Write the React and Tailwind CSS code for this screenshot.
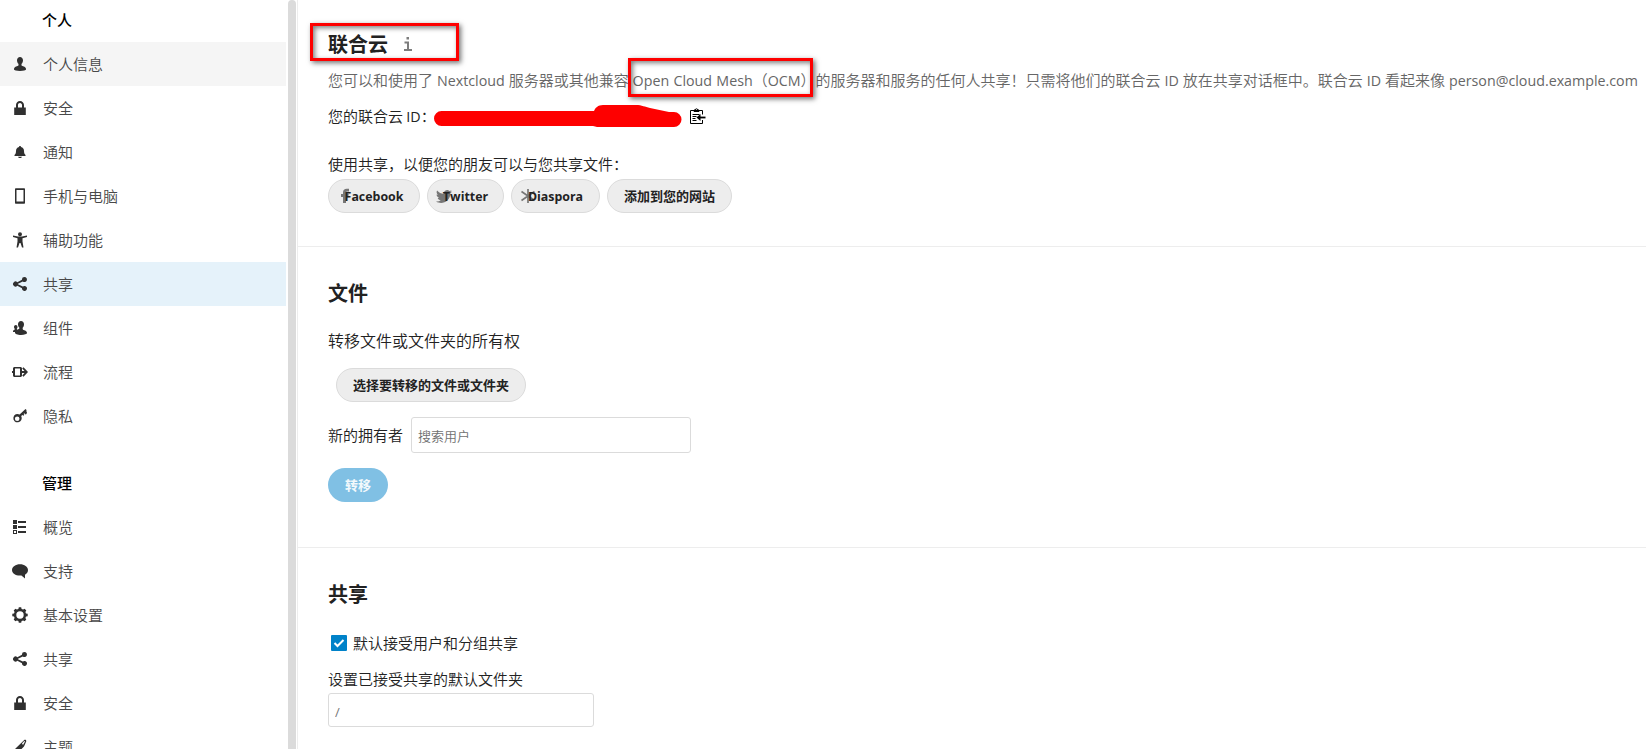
import React, { useState } from 'react';

const icons = {
  user: (
    <path d="M8 1C6.300 1 5 2.300 5 4.200c0 1.600.6 2.800 1.400 3.500.3.9.2 1.500-.2 2C4.600 10.300 2 11 2 12.800v.8C2 14.300 4.600 15 8 15s6-.7 6-1.400v-.8c0-1.800-2.600-2.500-4.200-3.100-.4-.5-.5-1.100-.2-2C10.400 7 11 5.800 11 4.200 11 2.300 9.700 1 8 1z" />
  ),
  lock: (
    <path d="M8 1C5.700 1 4 2.900 4 5v2.500H2.200V15h11.600V7.500H12V5c0-2.300-1.800-4-4-4zm0 2c1.250 0 2 1 2 2v2.500H6V5c0-1.200.75-2 2-2z" />
  ),
  bell: (
    <path d="M8 2c-.6 0-1 .4-1 1C5 3.500 4 5 4 7c0 2-.5 3-1.500 4v1h11v-1C12.500 10 12 9 12 7c0-2-1-3.500-3-4 0-.6-.4-1-1-1zM6 12.800c.2.8 1 1.300 2 1.300s1.800-.5 2-1.300z" />
  ),
  phone: (
    <path fillRule="evenodd" d="M4 .2h8c.6 0 1 .4 1 1v13.600c0 .6-.4 1-1 1H4c-.6 0-1-.4-1-1V1.200c0-.6.4-1 1-1zM4.500 2v11.500h7V2z" />
  ),
  accessibility: (
    <path d="M8 .2a2 2 0 1 1 0 4 2 2 0 0 1 0-4zM1 3.500l5 1h4l5-1v1.400l-4.500 1.300v3.300l1 6H10L8.500 11h-1L6 15.500H4.500l1-6V6.200L1 4.900z" />
  ),
  share: (
    <path d="M12.500 1a2.500 2.500 0 0 0-2.500 2.800L5.300 6.200a2.500 2.500 0 1 0 0 3.600l4.700 2.400a2.500 2.500 0 1 0 .8-1.600L6 8.200v-.4l4.800-2.400A2.500 2.500 0 1 0 12.500 1z" />
  ),
  group: (
    <path d="M9 1C7.200 1 6 2.300 6 4.200c0 1.500.5 2.600 1.300 3.300.2.6.1 1.200-.3 1.600-.6.2-1.200.4-1.700.7-.4-.3-.6-.5-.5-1 .5-.5.7-1.100.7-1.900C5.500 5.800 4.800 5 3.800 5S2 5.800 2 6.900c0 .8.300 1.500.7 1.900.1.500 0 .8-.2 1-.7.3-1.500.7-1.500 1.500v.7h2v.800C3 13.900 5.500 15 9 15s6-1 6-1.700v-.6c0-1.700-2.400-2.400-4-3-.4-.5-.5-1.200-.2-2.100C11.500 7 12 5.700 12 4.200 12 2.300 10.800 1 9 1z" />
  ),
  flow: (
    <path fillRule="evenodd" d="M2.500 3h6c.8 0 1.500.6 1.500 1.500V7h2.500l-2.300-2.400L11.500 3.300 16 8l-4.500 4.700-1.300-1.300L12.500 9H10v2.500c0 .9-.7 1.500-1.500 1.500h-6c-.8 0-1.500-.6-1.500-1.500V9H0V7h1V4.500C1 3.600 1.700 3 2.500 3zM3 4.500v7h5V4.500z" />
  ),
  key: (
    <path fillRule="evenodd" d="M13.500 1l1.300 1.300-.8.8 1 1-.5 2-1 .3-1.200-1.200-.7.700.8.8-1 1-1-.8-1.200 1.200a4.200 4.200 0 1 1-1.600-1.600zM5.200 8.400a2.300 2.300 0 1 0 0 4.600 2.300 2.300 0 0 0 0-4.600z" />
  ),
  overview: (
    <path fillRule="evenodd" d="M1 1h4v4H1zM6 2h8v2H6zM1 6h4v4H1zM6 7h8v2H6zM1 11h4v4H1zM2 12v2h2v-2zM6 12h8v2H6z" />
  ),
  support: (
    <path d="M8 1.300c4.400 0 8 2.500 8 5.700 0 2.100-1.100 3.700-3 4.700v3.800l-3.600-3C4.500 13.200 0 10.800 0 7c0-3.200 3.600-5.700 8-5.700z" />
  ),
  gear: (
    <path fillRule="evenodd" d="M6.800.3h2.400l.4 1.700 1.500.6 1.500-.9 1.700 1.700-.9 1.500.6 1.500 1.700.4v2.400l-1.700.4-.6 1.500.9 1.500-1.700 1.700-1.500-.9-1.500.6-.4 1.700H6.800L6.400 14l-1.500-.6-1.500.9-1.700-1.700.9-1.500L2 9.600.3 9.200V6.800L2 6.400l.6-1.500-.9-1.500 1.700-1.700 1.500.9L6.400 2zM8 4.300a3.700 3.700 0 1 0 0 7.400 3.700 3.700 0 0 0 0-7.400z" />
  ),
  theme: (
    <path fillRule="evenodd" d="M12.500.8c1.200-.3 2 .4 1.700 1.800L12 7.500 6.500 13 1 15.500 3 10zM12.300 2L10 4.500l1 1.400L13 2.600z" />
  ),
};

const personal = [
  { icon: 'user', label: '个人信息', className: 'bg-[#f5f5f5]' },
  { icon: 'lock', label: '安全' },
  { icon: 'bell', label: '通知' },
  { icon: 'phone', label: '手机与电脑' },
  { icon: 'accessibility', label: '辅助功能' },
  { icon: 'share', label: '共享', className: 'bg-[#e5f2fa]' },
  { icon: 'group', label: '组件' },
  { icon: 'flow', label: '流程' },
  { icon: 'key', label: '隐私' },
];

const admin = [
  { icon: 'overview', label: '概览' },
  { icon: 'support', label: '支持' },
  { icon: 'gear', label: '基本设置' },
  { icon: 'share', label: '共享' },
  { icon: 'lock', label: '安全' },
  { icon: 'theme', label: '主题' },
];

const NavList = ({ items }) => (
  <ul className="w-[286px]">
    {items.map((item) => (
      <li key={item.label} className={`flex h-11 items-center gap-[15px] pl-3 ${item.className || ''}`}>
        <svg viewBox="0 0 16 16" className="size-4 shrink-0 fill-[#303030]">{icons[item.icon]}</svg>
        <a href="#" className="text-[#484848]">{item.label}</a>
      </li>
    ))}
  </ul>
);

const Sidebar = () => (
  <nav className="flex h-full w-[298px] shrink-0 justify-between border-r border-[#ededed]">
    <div>
      <div className="flex h-[42px] items-center pb-px pl-[42px] font-medium text-black">个人</div>
      <NavList items={personal} />
      <div className="mt-[23px] flex h-11 items-center pl-[42px] font-medium text-black">管理</div>
      <NavList items={admin} />
    </div>
    <div className="mr-px h-[1200px] w-2 rounded-t bg-[#dbdbdb]" />
  </nav>
);

const Button = ({ className, children }) => (
  <button className={`relative flex h-[34px] items-center justify-center rounded-full border border-[#dbdbdb] bg-[#ededed] text-[13px] font-bold text-[#222] ${className}`}>
    {children}
  </button>
);

const Latin = ({ className = 'text-[14.25px] font-normal', children }) => (
  <span className={`font-['Open_Sans','Noto_Sans',sans-serif] ${className}`}>{children}</span>
);

const FederatedCloud = () => (
  <section className="h-[247px] border-b border-[#ededed] pl-[30px] pt-[29px]">
    <div className="relative flex h-[30px] items-center">
      <h2 className="text-xl font-bold">联合云</h2>
      <svg viewBox="0 0 16 16" className="ml-3 size-4 fill-[#7d7d7d]">
        <path d="M6.500 1H9v2.500H6.500zM4.500 5.500H9V13h3v2H4v-2h3V7.500H4.500z" />
      </svg>
      <div className="absolute -left-[18px] -top-1.5 h-[38px] w-[149px] border-3 border-[#fe0000] shadow-[2px_2px_5px_rgba(0,0,0,0.55),inset_2px_2px_5px_rgba(0,0,0,0.5)]" />
    </div>
    <p className="relative mt-2.5 h-[22px] whitespace-nowrap leading-[22px] text-[#666] [word-spacing:0.6px]">
      您可以和使用了 <Latin>Nextcloud</Latin> 服务器或其他兼容 <Latin>Open Cloud Mesh</Latin>（<Latin>OCM</Latin>）的服务器和服务的任何人共享！只需将他们的联合云 <Latin>ID</Latin> 放在共享对话框中。联合云 <Latin>ID</Latin> 看起来像 <Latin>person@cloud.example.com</Latin>
      <span className="absolute left-[300px] -top-[11px] h-[39px] w-[185px] border-3 border-[#fe0000] shadow-[2px_2px_5px_rgba(0,0,0,0.55),inset_2px_2px_5px_rgba(0,0,0,0.5)]" />
    </p>
    <div className="mt-[13px] flex h-6 items-center">
      <span className="w-[106px] whitespace-nowrap">您的联合云 <Latin>ID</Latin>：</span>
      <svg viewBox="0 0 248 24" className="h-6 w-[248px] fill-[#fe0000]">
        <path d="M7.500 7H160c1-3 4-6 9-6h33c6 0 9 2 14 3l19 4h5a7.500 7.500 0 0 1 0 15h-73c-3 0-5 0-8-1H7.500a7.500 7.500 0 0 1 0-15z" />
      </svg>
      <svg viewBox="0 0 16 16" className="ml-2 size-4 fill-none stroke-black">
        <path d="M12.500 6.500v-4h-12v13h12V12M4 3.500h5V2H7.700a1.200 1.200 0 0 0-2.400 0H4zM2.500 6.500h7M2.500 8.500h4M2.500 10.500h3M2.500 12.500h4" />
        <path d="M15.500 9.500H9" strokeWidth="1.800" />
        <path d="M6.500 9.500l4-3.500v7z" className="fill-black stroke-none" />
      </svg>
    </div>
    <p className="mt-[25px] h-[22px] leading-[22px]">使用共享，以便您的朋友可以与您共享文件：</p>
    <div className="mt-1 flex gap-[7px]">
      <Button className="w-[92px]">
        <svg viewBox="0 0 16 16" className="absolute left-2 top-2 size-4 fill-[#767676]">
          <path d="M6 15V9H4V6h2V4.500C6 2 7.500.8 9.600.8H12v2.700h-1.500C9.500 3.500 9 4 9 4.800V6h2.700l-.4 3H9v6z" />
        </svg>
        <Latin className="relative pt-0.5 text-[12.4px]">Facebook</Latin>
      </Button>
      <Button className="w-[77px]">
        <svg viewBox="0 0 16 16" className="absolute left-2 top-2 size-4 fill-[#767676]">
          <path d="M16 3.500c-.6.300-1.200.4-1.900.5.7-.4 1.200-1 1.400-1.800-.6.400-1.300.6-2.100.8A3.300 3.300 0 0 0 7.800 6C5.100 5.900 2.700 4.600 1.100 2.600c-.9 1.500-.4 3.400 1 4.400-.5 0-1-.2-1.500-.4 0 1.600 1.100 2.900 2.600 3.200-.5.1-1 .2-1.500.1.400 1.300 1.600 2.200 3.100 2.300A6.600 6.600 0 0 1 0 13.500c6 3.700 14.400 0 14.400-8.200.6-.5 1.200-1.100 1.600-1.800z" />
        </svg>
        <Latin className="relative pt-0.5 text-[12.4px]">Twitter</Latin>
      </Button>
      <Button className="w-[89px]">
        <svg viewBox="0 0 16 16" className="absolute left-2 top-2 size-4 fill-none stroke-[#767676]" strokeWidth="1.700">
          <path d="M8 1v14M1.500 3.500L8 8l-6.500 4.500M14.500 3.500L8 8l6.500 4.500" />
        </svg>
        <Latin className="relative pt-0.5 text-[12.4px]">Diaspora</Latin>
      </Button>
      <Button className="w-[125px]">添加到您的网站</Button>
    </div>
  </section>
);

const Files = () => (
  <section className="h-[301px] border-b border-[#ededed] pl-[30px] pt-[31px]">
    <h2 className="h-[30px] text-xl leading-[30px] font-bold">文件</h2>
    <h3 className="mt-5 h-6 text-base leading-6">转移文件或文件夹的所有权</h3>
    <Button className="ml-2 mt-4 w-[190px]">选择要转移的文件或文件夹</Button>
    <div className="mt-[15px] flex items-center gap-2">
      <label className="w-[75px]">新的拥有者</label>
      <input
        placeholder="搜索用户"
        className="h-9 w-[280px] rounded-[3px] border border-[#dbdbdb] px-1.5 text-[13px] placeholder:text-[#707070]"
      />
    </div>
    <button className="mt-[15px] flex h-[34px] w-[60px] items-center justify-center rounded-full bg-[#80c0e4] text-[13px] font-bold text-[#f3f9fc]">
      转移
    </button>
  </section>
);

const Sharing = () => {
  const [accept, setAccept] = useState(true);

  return (
    <section className="pl-[30px] pt-[31px]">
      <h2 className="h-[30px] text-xl leading-[30px] font-bold">共享</h2>
      <div className="ml-[3px] mt-[23px] flex h-[22px] items-center gap-1.5" onClick={() => setAccept(!accept)}>
        <span className="flex size-4 items-center justify-center rounded-[1px] bg-[#0082c9]">
          {accept && (
            <svg viewBox="0 0 16 16" className="size-4 fill-none stroke-white" strokeWidth="2">
              <path d="M3.500 8l3 3 6-6" />
            </svg>
          )}
        </span>
        <label>默认接受用户和分组共享</label>
      </div>
      <p className="mt-3.5 h-[22px] leading-[22px]">设置已接受共享的默认文件夹</p>
      <input
        defaultValue="/"
        className="mt-[3px] block h-[34px] w-[266px] rounded-[3px] border border-[#dbdbdb] px-1.5 pt-1 font-['Open_Sans',sans-serif] text-[13px] font-normal text-[#767676]"
      />
    </section>
  );
};

const App = () => (
  <div className="flex h-screen w-full overflow-hidden bg-white font-['Noto_Sans_CJK_SC',sans-serif] text-[15px] font-[350] text-[#222]">
    <Sidebar />
    <main className="min-w-0 flex-1">
      <FederatedCloud />
      <Files />
      <Sharing />
    </main>
  </div>
);

export default App;
